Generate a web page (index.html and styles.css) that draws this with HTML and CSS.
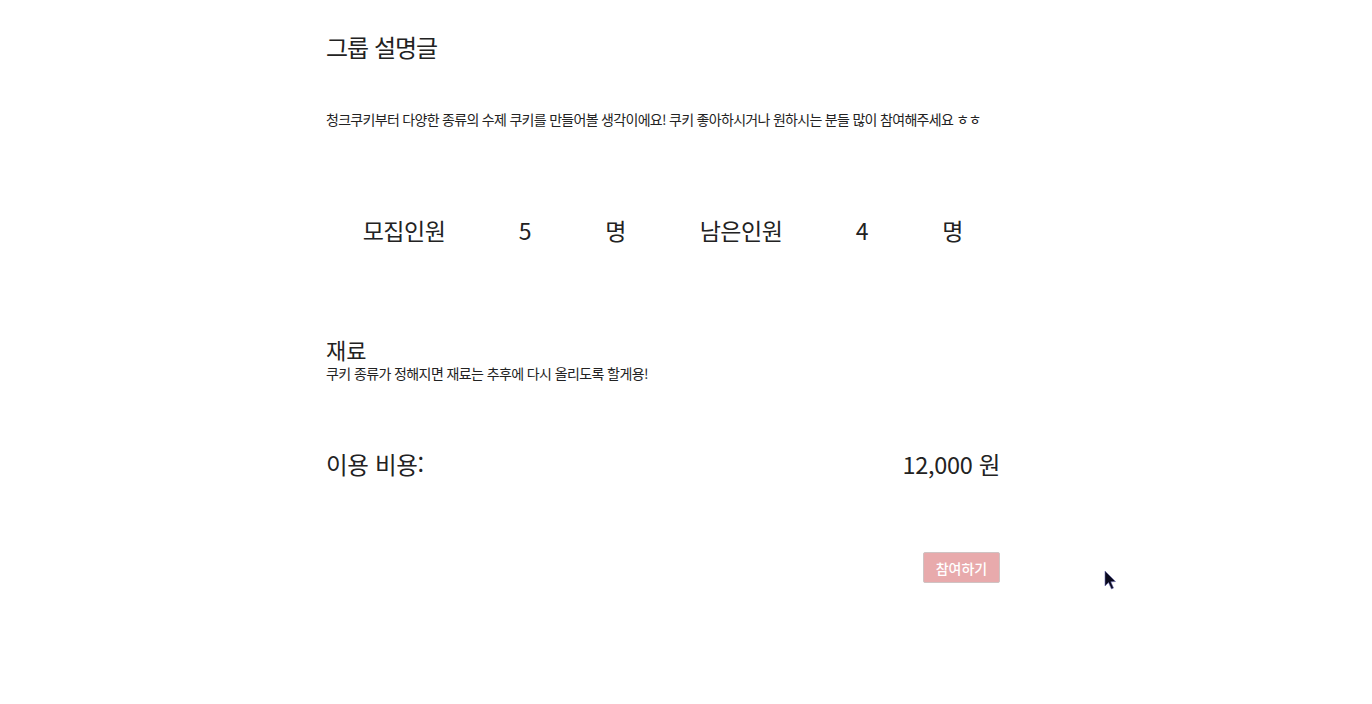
FILE: index.html
```html
<!DOCTYPE html>
<html lang="ko">
<head>
<meta charset="utf-8">
<link rel="stylesheet" href="styles.css">
</head>
<body>
<main class="page">
  <section class="group">
    <h1 class="title">그룹 설명글</h1>
    <p class="desc">청크쿠키부터 다양한 종류의 수제 쿠키를 만들어볼 생각이에요! 쿠키 좋아하시거나 원하시는 분들 많이 참여해주세요 ㅎㅎ</p>
  </section>
  <section class="stats">
    <span>모집인원</span><span>5</span><span>명</span>
    <span>남은인원</span><span>4</span><span>명</span>
  </section>
  <section class="material">
    <h2 class="subtitle">재료</h2>
    <p class="material-text">쿠키 종류가 정해지면 재료는 추후에 다시 올리도록 할게용!</p>
  </section>
  <section class="cost">
    <span>이용 비용:</span>
    <span>12,000 원</span>
  </section>
  <div class="actions">
    <button class="join">참여하기</button>
  </div>
</main>
<svg class="cursor" width="14" height="20" viewBox="0 0 14 20"><path d="M1 1 L1 16 L4.5 12.5 L7.5 19 L9.5 18 L6.8 11.8 L11.5 11.5 Z" fill="#0a0a1e" stroke="#6a6ab0" stroke-width="0.6"/></svg>
</body>
</html>
```
FILE: styles.css
```css
* { box-sizing: border-box; }
html, body { margin: 0; padding: 0; background: #fff; }
body {
  font-family: "Noto Sans CJK KR", "Noto Sans", sans-serif;
  color: #222;
  width: 1372px;
  height: 704px;
  position: relative;
  overflow: hidden;
}
.page {
  width: 674px;
  margin-left: 326px;
  padding-top: 30px;
  display: flex;
  flex-direction: column;
}
.title {
  margin: 0;
  font-size: 24px;
  font-weight: 400;
  line-height: 34px;
  letter-spacing: -1px;
}
.desc {
  margin: 45px 0 0;
  font-size: 14px;
  line-height: 20px;
  letter-spacing: -0.7px;
  white-space: nowrap;
}
.stats {
  margin-top: 85px;
  display: grid;
  grid-template-columns: 156px 86px 95px 156px 86px 95px;
  font-size: 23px;
  line-height: 32px;
  text-align: center;
  letter-spacing: -0.5px;
}
.material { margin-top: 88px; }
.subtitle {
  margin: 0;
  font-size: 22px;
  font-weight: 400;
  line-height: 30px;
}
.material-text {
  margin: -1px 0 0;
  font-size: 14px;
  line-height: 20px;
  letter-spacing: -0.6px;
}
.cost {
  margin-top: 65px;
  display: flex;
  justify-content: space-between;
  font-size: 23.5px;
  line-height: 32px;
  letter-spacing: -0.3px;
}
.actions {
  margin-top: 72px;
  display: flex;
  justify-content: flex-end;
}
.join {
  width: 77px;
  height: 31px;
  background: #e8aaac;
  border: 1px solid #cfc3c3;
  border-radius: 2px;
  color: #fff;
  font-family: inherit;
  font-size: 14px;
  font-weight: 500;
  padding: 0;
}
.cursor {
  position: absolute;
  left: 1104px;
  top: 570px;
}
```
